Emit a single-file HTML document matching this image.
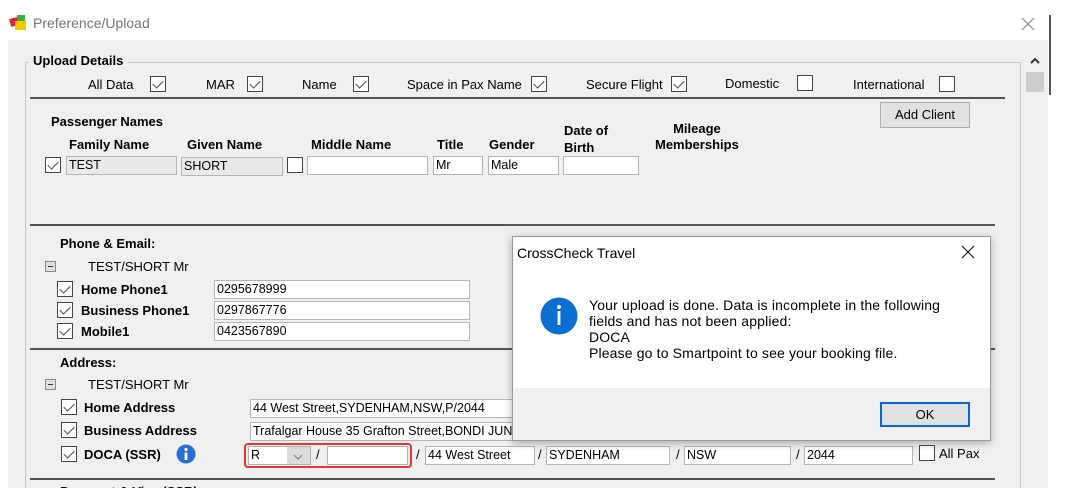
<!DOCTYPE html>
<html><head><meta charset="utf-8"><style>
*{box-sizing:border-box;margin:0;padding:0}
body{width:1066px;height:497px;background:#fff;position:relative;overflow:hidden;font-family:"Liberation Sans",Tahoma,sans-serif;font-size:13px;color:#000}
.a{position:absolute;white-space:nowrap}
.b{font-weight:bold}
.cb{position:absolute;width:16px;height:16px;border:1px solid #444;background:#fff}
.cb.k::after{content:"";position:absolute;left:4px;top:1px;width:5px;height:9px;border:solid #444;border-width:0 1.5px 1.5px 0;transform:rotate(45deg)}
.in{position:absolute;height:19px;border:1px solid #b5b5b5;background:#fff;font-size:12.5px;padding-left:2px;line-height:17px;white-space:nowrap;overflow:hidden}
.g{background:#e9e9e9}
.hl{position:absolute;height:2px;background:#555}
.mn{position:absolute;width:11px;height:11px;border:1px solid #888;background:#e0e0e0}
.mn::after{content:"";position:absolute;left:2px;top:4px;width:5px;height:1px;background:#333}
</style></head><body>
<svg class="a" style="left:9px;top:14px" width="20" height="18" viewBox="0 0 20 18"><rect x="1" y="4" width="8" height="8" fill="#d23" transform="rotate(-15 5 8)"/><rect x="8" y="1" width="8" height="7" fill="#4a4"/><rect x="6" y="7" width="11" height="9" fill="#ec0"/></svg>
<div class="a" style="left:33px;top:15px;font-size:14px;color:#777">Preference/Upload</div>
<svg class="a" style="left:1021px;top:17px" width="14" height="14"><path d="M1 1L13 13M13 1L1 13" stroke="#888" stroke-width="1.2"/></svg>
<div class="a" style="left:1049px;top:15px;width:2px;height:80px;background:#555"></div>
<div class="a" style="left:8px;top:40px;width:1040px;height:448px;background:#f0f0f0;overflow:hidden">
<div class="a" style="left:17px;top:22px;width:996px;height:440px;border:1px solid #c8c8c8;border-bottom:none"></div>
</div>
<svg class="a" style="left:1029px;top:56px" width="12" height="10"><path d="M2 7L6 3L10 7" stroke="#333" stroke-width="2" fill="none"/></svg>
<div class="a" style="left:1026px;top:72px;width:18px;height:20px;background:#cdcdcd"></div>
<div class="a b" style="left:29px;top:53px;background:#f0f0f0;padding:0 4px;font-size:13px">Upload Details</div>
<div class="a" style="left:88px;top:77px">All Data</div><div class="cb k" style="left:150px;top:76px"></div>
<div class="a" style="left:206px;top:77px">MAR</div><div class="cb k" style="left:247px;top:76px"></div>
<div class="a" style="left:302px;top:77px">Name</div><div class="cb k" style="left:353px;top:76px"></div>
<div class="a" style="left:407px;top:77px">Space in Pax Name</div><div class="cb k" style="left:531px;top:76px"></div>
<div class="a" style="left:586px;top:77px">Secure Flight</div><div class="cb k" style="left:671px;top:76px"></div>
<div class="a" style="left:725px;top:76px">Domestic</div><div class="cb" style="left:797px;top:75px"></div>
<div class="a" style="left:853px;top:77px">International</div><div class="cb" style="left:939px;top:76px"></div>
<div class="hl" style="left:30px;top:97px;width:975px"></div>
<div class="a" style="left:880px;top:102px;width:90px;height:26px;border:1px solid #adadad;background:#e1e1e1;text-align:center;line-height:24px">Add Client</div>
<div class="a b" style="left:51px;top:114px">Passenger Names</div>
<div class="a b" style="left:69px;top:137px">Family Name</div>
<div class="a b" style="left:187px;top:137px">Given Name</div>
<div class="a b" style="left:311px;top:137px">Middle Name</div>
<div class="a b" style="left:437px;top:137px">Title</div>
<div class="a b" style="left:489px;top:137px">Gender</div>
<div class="a b" style="left:564px;top:122px;line-height:17px">Date of<br>Birth</div>
<div class="a b" style="left:655px;top:121px;line-height:16px;text-align:center">Mileage<br>Memberships</div>
<div class="cb k" style="left:45px;top:157px"></div>
<div class="in g" style="left:66px;top:156px;width:111px">TEST</div>
<div class="in g" style="left:181px;top:157px;width:102px">SHORT</div>
<div class="cb" style="left:287px;top:157px"></div>
<div class="in" style="left:307px;top:156px;width:121px"></div>
<div class="in" style="left:433px;top:156px;width:50px">Mr</div>
<div class="in" style="left:488px;top:156px;width:71px">Male</div>
<div class="in" style="left:563px;top:156px;width:76px"></div>
<div class="hl" style="left:30px;top:224px;width:965px"></div>
<div class="a b" style="left:60px;top:236px">Phone &amp; Email:</div>
<div class="mn" style="left:45px;top:261px"></div>
<div class="a" style="left:88px;top:259px">TEST/SHORT Mr</div>
<div class="cb k" style="left:57px;top:281px"></div><div class="a b" style="left:81px;top:282px">Home Phone1</div><div class="in" style="left:214px;top:280px;width:256px">0295678999</div>
<div class="cb k" style="left:57px;top:302px"></div><div class="a b" style="left:81px;top:303px">Business Phone1</div><div class="in" style="left:214px;top:301px;width:256px">0297867776</div>
<div class="cb k" style="left:57px;top:323px"></div><div class="a b" style="left:81px;top:324px">Mobile1</div><div class="in" style="left:214px;top:322px;width:256px">0423567890</div>
<div class="hl" style="left:30px;top:348px;width:965px"></div>
<div class="a b" style="left:60px;top:355px">Address:</div>
<div class="mn" style="left:45px;top:379px"></div>
<div class="a" style="left:88px;top:377px">TEST/SHORT Mr</div>
<div class="cb k" style="left:61px;top:399px"></div><div class="a b" style="left:84px;top:400px">Home Address</div><div class="in" style="left:250px;top:399px;width:270px">44 West Street,SYDENHAM,NSW,P/2044</div>
<div class="cb k" style="left:61px;top:422px"></div><div class="a b" style="left:84px;top:423px">Business Address</div><div class="in" style="left:250px;top:422px;width:270px">Trafalgar House 35 Grafton Street,BONDI JUNCTION</div>
<div class="cb k" style="left:61px;top:446px"></div><div class="a b" style="left:84px;top:447px">DOCA (SSR)</div>
<svg class="a" style="left:176px;top:444px" width="20" height="20"><circle cx="10" cy="10" r="9.5" fill="#2a6fd6"/><circle cx="10" cy="5.5" r="1.6" fill="#fff"/><rect x="8.6" y="8.5" width="2.8" height="7.5" fill="#fff"/></svg>
<div class="a" style="left:244px;top:443px;width:168px;height:25px;border:2px solid #e33;border-radius:4px"></div>
<div class="in" style="left:248px;top:446px;width:63px">R</div>
<div class="a" style="left:287px;top:447px;width:23px;height:17px;background:#dcdcdc"></div>
<svg class="a" style="left:292px;top:452px" width="12" height="10"><path d="M2 3L6 7L10 3" stroke="#777" fill="none"/></svg>
<div class="a" style="left:316px;top:447px">/</div>
<div class="in" style="left:327px;top:446px;width:81px"></div>
<div class="a" style="left:416px;top:447px">/</div>
<div class="in" style="left:425px;top:446px;width:110px">44 West Street</div>
<div class="a" style="left:538px;top:447px">/</div>
<div class="in" style="left:546px;top:446px;width:124px">SYDENHAM</div>
<div class="a" style="left:676px;top:447px">/</div>
<div class="in" style="left:684px;top:446px;width:107px">NSW</div>
<div class="a" style="left:796px;top:447px">/</div>
<div class="in" style="left:804px;top:446px;width:109px">2044</div>
<div class="cb" style="left:919px;top:445px"></div>
<div class="a" style="left:939px;top:446px">All Pax</div>
<div class="hl" style="left:30px;top:478px;width:965px"></div>
<div class="a" style="left:60px;top:482px;height:6px;overflow:hidden"><div class="b" style="margin-top:2px">Passport &amp; Visa (SSR)</div></div>
<div class="a" style="left:512px;top:236px;width:479px;height:205px;background:#fff;border:1px solid #999;box-shadow:0 2px 8px rgba(0,0,0,.3)">
<div class="a" style="left:4px;top:8px;font-size:14px">CrossCheck Travel</div>
<svg class="a" style="left:448px;top:8px" width="14" height="14"><path d="M1 1L13 13M13 1L1 13" stroke="#222" stroke-width="1.2"/></svg>
<svg class="a" style="left:27px;top:60px" width="38" height="38"><circle cx="19" cy="19" r="18.5" fill="#0a6fd1"/><circle cx="19" cy="10" r="2" fill="#fff"/><rect x="17.6" y="14" width="2.8" height="14" fill="#fff"/></svg>
<div class="a" style="left:76px;top:60px;font-size:14px;line-height:16px;letter-spacing:.15px">Your upload is done. Data is incomplete in the following<br>fields and has not been applied:<br>DOCA<br>Please go to Smartpoint to see your booking file.</div>
<div class="a" style="left:0;top:151px;width:477px;height:52px;background:#f0f0f0"></div>
<div class="a" style="left:367px;top:165px;width:90px;height:25px;border:2px solid #0a64d8;background:#e1e1e1;text-align:center;line-height:21px">OK</div>
</div>
</body></html>
